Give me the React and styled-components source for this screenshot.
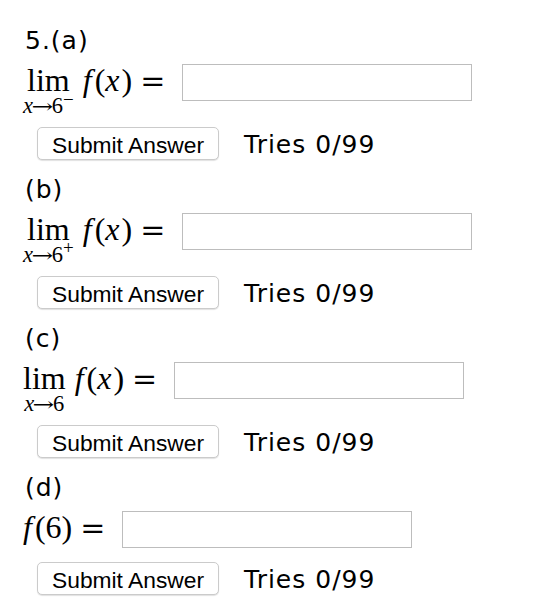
import React from "react"
import styled, { createGlobalStyle } from "styled-components"

const GlobalStyle = createGlobalStyle`
  body {
    margin: 0;
    background: #fff;
  }
`

const Page = styled.div`
  padding: 26px 0 0 25px;
  font-family: "DejaVu Sans", Verdana, sans-serif;
  color: #000;
`

const Part = styled.section`
  margin-bottom: 15px;
`

const Label = styled.div`
  font-size: 25px;
  line-height: 30px;
  height: 30px;
  letter-spacing: 1px;
`

const AnswerRow = styled.div`
  display: flex;
  align-items: flex-start;
  min-height: 40px;
  margin: 8px 0 0 -2px;
`

const MathLine = styled.div`
  display: flex;
  align-items: baseline;
  font-family: "Liberation Serif", "Times New Roman", serif;
  font-size: 32px;
  line-height: 32px;
  white-space: nowrap;
`

const Limit = styled.span`
  display: inline-flex;
  flex-direction: column;
  align-items: center;
  margin-right: 9px;
`

const LimWord = styled.span`
  line-height: 32px;
`

const LimSub = styled.span`
  font-size: 22.5px;
  line-height: 20px;
  white-space: nowrap;
`

const Arrow = styled.span`
  display: inline-block;
  margin: 0 1px;
  font-family: "DejaVu Serif", serif;
  font-size: 20px;
  transform: scaleX(1.3);
`

const Var = styled.i`
  font-style: italic;
  margin-right: ${p => p.$after || 0}px;
`

const Side = styled.sup`
  font-size: 19px;
  line-height: 0;
  vertical-align: ${p => p.$raise}px;
`

const Eq = styled.span`
  margin: 0 17px 0 8px;
  font-family: "DejaVu Serif", serif;
  font-size: 30px;
`

const AnswerInput = styled.input`
  width: 290px;
  height: 37px;
  box-sizing: border-box;
  margin: 0;
  padding: 0 4px;
  border: 1px solid #bdbdbd;
  border-radius: 0;
  background: #fff;
  font-size: 18px;
  outline: none;
`

const ButtonRow = styled.div`
  display: flex;
  align-items: baseline;
  margin: 11px 0 0 12px;
`

const SubmitButton = styled.button`
  height: 33px;
  box-sizing: border-box;
  padding: 3px 14px 0;
  border: 1px solid #cbcbcb;
  border-radius: 5px;
  background: #fff;
  box-shadow: 0 1px 1px rgba(0, 0, 0, 0.12);
  font-family: "Liberation Sans", Arial, sans-serif;
  font-size: 22.8px;
  line-height: 28px;
  color: #000;
  cursor: pointer;
`

const Tries = styled.span`
  margin-left: 25px;
  font-size: 25px;
  line-height: 30px;
  letter-spacing: 1px;
`

function LimitExpr({ side }) {
  return (
    <MathLine>
      <Limit>
        <LimWord>lim</LimWord>
        <LimSub>
          <Var>x</Var>
          <Arrow>→</Arrow>6
          {side === "-" && <Side $raise={7}>−</Side>}
          {side === "+" && <Side $raise={8}>+</Side>}
        </LimSub>
      </Limit>
      <span>
        <Var $after={3}>f</Var>(<Var $after={2}>x</Var>)
      </span>
      <Eq>=</Eq>
    </MathLine>
  )
}

function ValueExpr() {
  return (
    <MathLine>
      <span>
        <Var $after={3}>f</Var>(6)
      </span>
      <Eq>=</Eq>
    </MathLine>
  )
}

const parts = [
  { label: "5.(a)", kind: "limit", side: "-" },
  { label: "(b)", kind: "limit", side: "+" },
  { label: "(c)", kind: "limit", side: null },
  { label: "(d)", kind: "value" },
]

export default function App() {
  return (
    <Page>
      <GlobalStyle />
      {parts.map(part => (
        <Part key={part.label}>
          <Label>{part.label}</Label>
          <AnswerRow>
            {part.kind === "limit" ? <LimitExpr side={part.side} /> : <ValueExpr />}
            <AnswerInput type="text" />
          </AnswerRow>
          <ButtonRow>
            <SubmitButton type="button">Submit Answer</SubmitButton>
            <Tries>Tries 0/99</Tries>
          </ButtonRow>
        </Part>
      ))}
    </Page>
  )
}
